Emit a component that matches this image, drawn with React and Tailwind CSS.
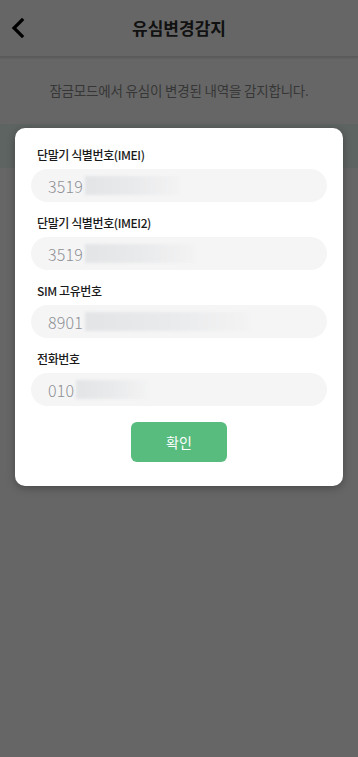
import React from "react";

const font = { fontFamily: '"Noto Sans CJK KR", "Noto Sans", sans-serif' };

function Field({ label, value, blurW }) {
  return (
    <div className="flex flex-col">
      <div className="h-5 flex items-center pl-[6px] text-[12px] tracking-[-0.4px] text-[#1a1a1a] font-medium leading-none">{label}</div>
      <div className="mt-1 h-[33px] rounded-full bg-[#f5f5f6] flex items-center pl-[17px] overflow-hidden">
        <span className="text-[16px] font-light text-[#8e9095] leading-none tracking-[0.2px]">{value}</span>
        <div className={`ml-[2px] h-[19px] ${blurW} bg-gradient-to-r from-[#e3e4e6] via-[#e9eaeb] to-[#f3f3f4] blur-[1.5px]`} />
      </div>
    </div>
  );
}

export default function App() {
  return (
    <div className="relative w-[358px] h-[757px] bg-[#666666] overflow-hidden" style={font}>
      <div className="h-[57px] flex items-center justify-center relative border-b border-[#5a5a5a] shadow-[0_1px_2px_rgba(0,0,0,0.15)]">
        <svg className="absolute left-[11px] top-[18px]" width="14" height="20" viewBox="0 0 14 20">
          <path d="M11 2 L3 10 L11 18" fill="none" stroke="#000" strokeWidth="3.2" strokeLinecap="square" />
        </svg>
        <span className="text-[17px] font-bold text-[#111]">유심변경감지</span>
      </div>
      <div className="h-[67px] flex items-center justify-center">
        <span className="text-[13.5px] tracking-[-0.2px] text-[#363636]">잠금모드에서 유심이 변경된 내역을 감지합니다.</span>
      </div>
      <div className="h-[44px] bg-[#5e6461]" />

      <div className="absolute left-[15px] top-[128px] w-[328px] bg-white rounded-[10px] shadow-[0_2px_8px_rgba(0,0,0,0.3)] px-4 pt-[17px] pb-6">
        <div className="flex flex-col gap-[11px]">
          <Field label="단말기 식별번호(IMEI)" value="3519" blurW="w-[95px]" />
          <Field label="단말기 식별번호(IMEI2)" value="3519" blurW="w-[110px]" />
          <Field label="SIM 고유번호" value="8901" blurW="w-[165px]" />
          <Field label="전화번호" value="010" blurW="w-[72px]" />
        </div>
        <div className="mt-4 flex justify-center">
          <button className="w-[96px] h-[40px] rounded-[6px] bg-[#58bc7e] text-white text-[14px]">확인</button>
        </div>
      </div>
    </div>
  );
}
